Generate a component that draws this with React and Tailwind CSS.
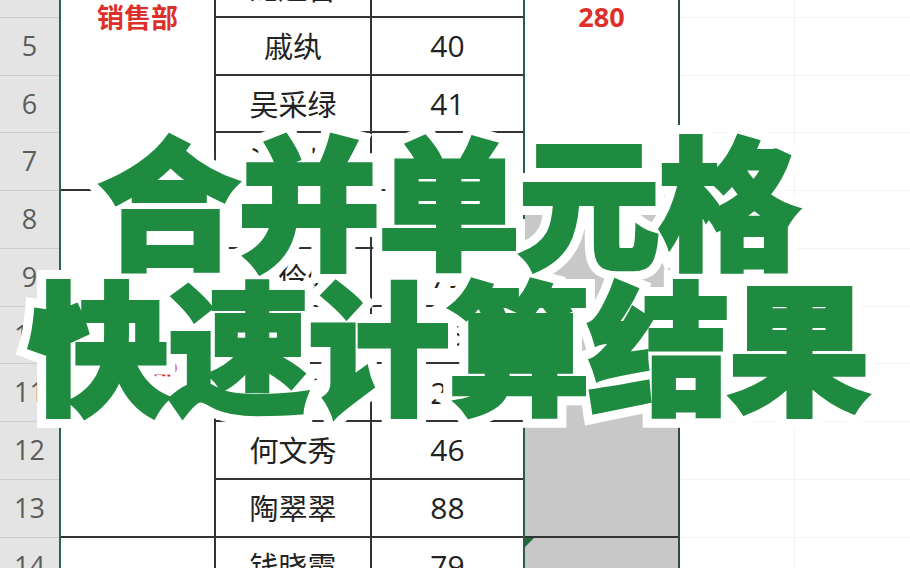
import React from "react";

const rowNums = [4, 5, 6, 7, 8, 9, 10, 11, 12, 13, 14];
const names = ["龙超吉", "戚纨", "吴采绿", "汪静怡", "韦丽丽", "孔伶俐", "周明", "苏欣然", "何文秀", "陶翠翠", "钱晓霞"];
const nums = ["53", "40", "41", "60", "75", "79", "15", "29", "46", "88", "79"];

const cjk = { fontFamily: '"Noto Sans CJK SC", "Noto Sans", sans-serif' };
const num = { fontFamily: '"Open Sans", "Liberation Sans", sans-serif' };

function Overlay({ layer }) {
  const base =
    "absolute left-0 right-0 top-[124px] flex flex-col items-center text-[142px] leading-[145px] font-black tracking-[-2px] pr-[14px] whitespace-nowrap";
  const cls =
    layer === "halo"
      ? base + " text-white [-webkit-text-stroke:22px_white]"
      : base + " text-[#1e8b40] [-webkit-text-stroke:4px_#1e8b40]";
  return (
    <div className={cls} style={cjk}>
      <div>合并单元格</div>
      <div>快速计算结果</div>
    </div>
  );
}

export default function App() {
  return (
    <div className="relative w-[910px] h-[568px] overflow-hidden bg-white">
      <div className="flex -mt-[40px]">
        {/* row header */}
        <div className="w-[61px] shrink-0 flex flex-col bg-[#e4e4e4] border-r-2 border-[#2b6548]">
          {rowNums.map((n) => (
            <div
              key={n}
              className="h-[57.75px] shrink-0 flex items-center justify-center border-b border-[#cdcdcd] text-[27px] text-[#5c5c5c]"
              style={num}
            >
              {n}
            </div>
          ))}
        </div>
        {/* column B */}
        <div className="w-[155px] shrink-0 flex flex-col border-r-2 border-[#333]">
          <div className="h-[231px] shrink-0 border-b-2 border-[#333] flex justify-center pt-[42px]">
            <span className="text-[27px] leading-[30px] font-bold text-[#de2f2a]" style={cjk}>
              销售部
            </span>
          </div>
          <div className="h-[346.5px] shrink-0 border-b-2 border-[#333] flex items-center justify-center">
            <span className="text-[27px] leading-[30px] font-bold text-[#de2f2a]" style={cjk}>
              市场部
            </span>
          </div>
          <div className="h-[57.75px] shrink-0"></div>
        </div>
        {/* column C */}
        <div className="w-[156px] shrink-0 flex flex-col border-r-2 border-[#333]">
          {names.map((t, i) => (
            <div
              key={i}
              className="h-[57.75px] shrink-0 border-b-2 border-[#333] flex items-center justify-center text-[29px] text-[#222]"
              style={cjk}
            >
              {t}
            </div>
          ))}
        </div>
        {/* column D */}
        <div className="w-[153px] shrink-0 flex flex-col border-r-2 border-[#2b5e4a]">
          {nums.map((t, i) => (
            <div
              key={i}
              className="h-[57.75px] shrink-0 border-b-2 border-[#333] flex items-center justify-center text-[30px] text-[#222]"
              style={num}
            >
              {t}
            </div>
          ))}
        </div>
        {/* column E */}
        <div className="w-[155px] shrink-0 flex flex-col border-r-2 border-[#2f4b42]">
          <div className="h-[231px] shrink-0 border-b-2 border-[#333] bg-white flex justify-center pt-[42px]">
            <span className="text-[27px] leading-[30px] font-bold text-[#de2f2a]" style={num}>
              280
            </span>
          </div>
          <div className="h-[346.5px] shrink-0 border-b-2 border-[#333] bg-[#c8c8c8] flex items-center justify-center">
            <span className="text-[27px] leading-[30px] font-bold text-[#de2f2a]" style={num}>
              318
            </span>
          </div>
          <div className="relative h-[57.75px] shrink-0 bg-[#c8c8c8]">
            <svg className="absolute left-0 top-0" width="9" height="9" viewBox="0 0 9 9">
              <polygon points="0,0 9,0 0,9" fill="#1f6b3a" />
            </svg>
          </div>
        </div>
        {/* column F */}
        <div className="flex-1 flex flex-col">
          {rowNums.map((n) => (
            <div key={n} className="h-[57.75px] shrink-0 border-b border-[#f3f3f3] flex">
              <div className="w-[115px] border-r border-[#f3f3f3]"></div>
              <div className="flex-1"></div>
            </div>
          ))}
        </div>
      </div>
      <Overlay layer="halo" />
      <Overlay layer="fill" />
    </div>
  );
}
